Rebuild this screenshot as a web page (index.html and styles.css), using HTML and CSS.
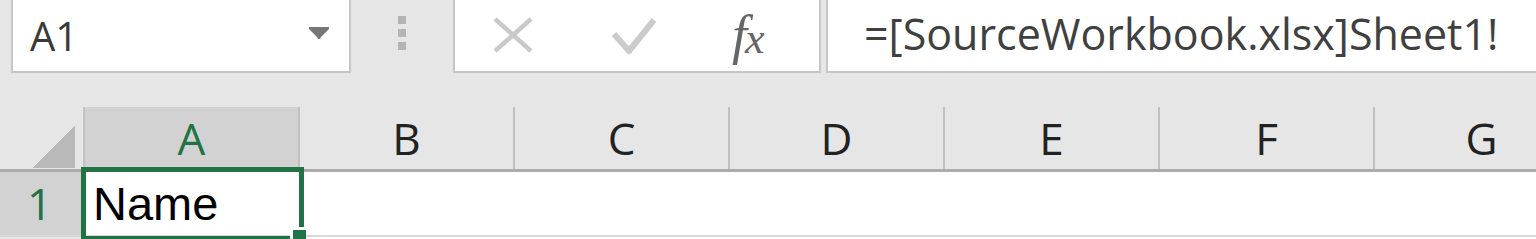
FILE: index.html
```html
<!DOCTYPE html>
<html lang="en">
<head>
  <meta charset="UTF-8" />
  <title>Formula bar</title>
  <link rel="stylesheet" href="styles.css">
</head>
<body>
  <!-- Formula bar -->
  <div class="formula-bar">
    <div class="name-box">
      <span class="name-ref">A1</span>
      <svg class="name-drop" width="20" height="12" viewBox="0 0 20 12">
        <polygon points="0,0 20,0 20,2 12,10 11,12 9,12 8,10 0,2" fill="#777" />
      </svg>
    </div>
    <div class="grip"><span></span><span></span><span></span></div>
    <div class="fx-buttons">
      <svg class="btn-cancel" width="40" height="36" viewBox="0 0 40 36">
        <path d="M2 2 L38 34 M38 2 L2 34" stroke="#c9c9c9" stroke-width="4.5" fill="none" />
      </svg>
      <svg class="btn-enter" width="46" height="38" viewBox="0 0 46 38">
        <path d="M3 17 L18 34 L43 3" stroke="#cbcbcb" stroke-width="6" fill="none" stroke-linejoin="round" />
      </svg>
      <span class="fx"><span class="fx-f">f</span><span class="fx-x">x</span></span>
    </div>
    <div class="formula-input">=[SourceWorkbook.xlsx]Sheet1!</div>
  </div>

  <!-- Sheet grid -->
  <div class="sheet">
    <div class="col-heads">
      <div class="corner"><span class="corner-tri"></span></div>
      <div class="col-head active">A</div>
      <div class="col-head">B</div>
      <div class="col-head">C</div>
      <div class="col-head">D</div>
      <div class="col-head">E</div>
      <div class="col-head">F</div>
      <div class="col-head">G</div>
    </div>
    <div class="row">
      <div class="row-head active">1</div>
      <div class="cell selected">Name<span class="fill-handle"></span></div>
      <div class="cell"></div>
      <div class="cell"></div>
      <div class="cell"></div>
      <div class="cell"></div>
      <div class="cell"></div>
      <div class="cell"></div>
    </div>
    <div class="row">
      <div class="row-head"></div>
      <div class="cell"></div>
    </div>
  </div>
</body>
</html>
```

FILE: styles.css
```css
* {
  margin: 0;
  padding: 0;
  box-sizing: border-box;
}
body {
  width: 1536px;
  height: 239px;
  overflow: hidden;
  background: #e6e6e6;
  font-family: 'Open Sans', 'Noto Sans', sans-serif;
  color: #333;
}

/* Formula bar */
.formula-bar {
  display: flex;
  height: 73px;
}
.name-box {
  display: flex;
  align-items: center;
  width: 340px;
  margin-left: 11px;
  background: #fff;
  border: 2px solid #c6c6c6;
  border-top: none;
  padding-left: 17px;
}
.name-ref {
  font-size: 40px;
  line-height: 71px;
  color: #3a3a3a;
  flex: 1;
}
.name-drop {
  margin-right: 20px;
  margin-top: -6px;
}
.grip {
  width: 102px;
  display: flex;
  flex-direction: column;
  align-items: center;
  gap: 5px;
  padding-top: 16px;
}
.grip span {
  width: 8px;
  height: 8px;
  background: #b4b4b4;
}
.fx-buttons {
  display: flex;
  align-items: flex-start;
  width: 368px;
  background: #fff;
  border: 2px solid #c6c6c6;
  border-top: none;
}
.btn-cancel {
  margin-left: 38px;
  margin-top: 17px;
}
.btn-enter {
  margin-left: 78px;
  margin-top: 17px;
}
.fx {
  margin-left: 75px;
  font-family: 'Liberation Serif', serif;
  font-style: italic;
  line-height: 71px;
  color: #666;
}
.fx-f {
  font-size: 54px;
}
.fx-x {
  font-size: 44px;
  margin-left: -2px;
}
.formula-input {
  flex: 1;
  margin-left: 5px;
  background: #fff;
  border-left: 2px solid #c6c6c6;
  border-bottom: 2px solid #c6c6c6;
  padding-left: 36px;
  font-size: 43px;
  line-height: 67px;
  color: #404040;
  white-space: nowrap;
}

/* Sheet */
.sheet {
  margin-top: 34px;
}
.col-heads {
  display: flex;
  height: 65px;
  border-bottom: 3px solid #ababab;
}
.corner {
  width: 85px;
  flex: none;
  border-right: 2px solid #c2c2c2;
  display: flex;
  justify-content: flex-end;
  align-items: flex-end;
  padding: 0 8px 1px 0;
}
.corner-tri {
  width: 43px;
  height: 43px;
  background: linear-gradient(to bottom right, transparent 50%, #b9b9b9 50%);
}
.col-head {
  width: 215px;
  flex: none;
  text-align: center;
  font-size: 44px;
  line-height: 62px;
  color: #222;
  border-right: 2px solid #c0c0c0;
}
.col-head.active,
.row-head.active {
  background: #d2d2d2;
  color: #217346;
}
.row {
  display: flex;
  height: 65px;
  border-bottom: 2px solid #d8d8d8;
}
.row-head {
  width: 85px;
  flex: none;
  text-align: center;
  font-size: 44px;
  line-height: 63px;
  color: #222;
  padding-right: 6px;
}
.cell {
  width: 215px;
  flex: none;
  background: #fff;
  font-family: 'Liberation Sans', Arial, sans-serif;
  font-size: 47px;
  line-height: 63px;
  color: #000;
  padding-left: 8px;
}
.row .cell:last-child {
  flex: 1;
}
.cell.selected {
  position: relative;
}
.cell.selected::after {
  content: '';
  position: absolute;
  left: -4px;
  top: -5px;
  right: -4px;
  bottom: -6px;
  border: 5px solid #217346;
}
.fill-handle {
  position: absolute;
  right: -6px;
  bottom: -8px;
  width: 16px;
  height: 16px;
  background: #217346;
  border-top: 3px solid #fff;
  border-left: 3px solid #fff;
  z-index: 1;
}
```
